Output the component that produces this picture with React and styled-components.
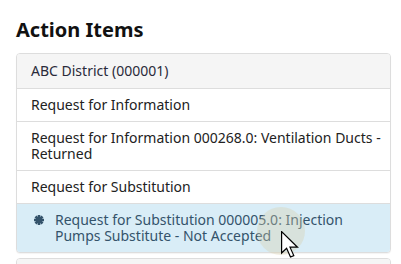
import React from 'react';
import styled, { createGlobalStyle } from 'styled-components';

const GlobalStyle = createGlobalStyle`
  html, body {
    margin: 0;
    padding: 0;
    background: #fff;
  }
  body {
    font-family: 'Noto Sans', 'Open Sans', sans-serif;
    color: #222;
  }
`;

const Page = styled.div`
  position: relative;
  width: 401px;
  height: 264px;
  overflow: hidden;
  padding: 0 10px 0 16px;
  box-sizing: border-box;
`;

const Title = styled.h2`
  margin: 0;
  padding-top: 16px;
  font-size: 20px;
  line-height: 28px;
  font-weight: 700;
  color: #111;
  height: 37px;
`;

const Panel = styled.section`
  border: 1px solid #ddd;
  border-radius: 4px;
  background: #fff;
  overflow: hidden;
  margin-bottom: 5px;
  box-shadow: 0 1px 1px rgba(0, 0, 0, 0.05);
`;

const PanelHeading = styled.div`
  background: #f5f5f5;
  padding: 9px 14px;
  font-size: 14px;
  line-height: 16px;
  color: #2a2a3a;
  min-height: 16px;
`;

const Row = styled.div`
  display: flex;
  align-items: flex-start;
  gap: 11px;
  border-top: 1px solid #ddd;
  padding: 8px 8px 8px 14px;
  font-size: 14px;
  line-height: 16px;
  background: ${(p) => (p.$active ? '#d9edf7' : '#fff')};
  color: ${(p) => (p.$active ? '#34536b' : '#222')};
`;

const Icon = styled.svg`
  flex: none;
  width: 10px;
  height: 10px;
  margin: 3px 0 0 3px;
`;

const Cursor = styled.div`
  position: absolute;
  left: 257px;
  top: 207px;
  width: 48px;
  height: 48px;
  border-radius: 50%;
  background: rgba(215, 205, 170, 0.35);
  pointer-events: none;
  svg {
    position: absolute;
    left: 24px;
    top: 24px;
  }
`;

function Asterisk() {
  return (
    <Icon viewBox="0 0 10 10">
      <g stroke="#34536b" strokeWidth="2.6" strokeLinecap="butt">
        <line x1="5" y1="0" x2="5" y2="10" />
        <line x1="0" y1="5" x2="10" y2="5" />
        <line x1="1.5" y1="1.5" x2="8.5" y2="8.5" />
        <line x1="8.5" y1="1.5" x2="1.5" y2="8.5" />
      </g>
    </Icon>
  );
}

const items = [
  { text: 'Request for Information' },
  { text: 'Request for Information 000268.0: Ventilation Ducts - Returned' },
  { text: 'Request for Substitution' },
  {
    text: 'Request for Substitution 000005.0: Injection Pumps Substitute - Not Accepted',
    active: true,
  },
];

export default function App() {
  return (
    <Page>
      <GlobalStyle />
      <Title>Action Items</Title>
      <Panel>
        <PanelHeading>ABC District (000001)</PanelHeading>
        {items.map((item) => (
          <Row key={item.text} $active={item.active}>
            {item.active && <Asterisk />}
            <span>{item.text}</span>
          </Row>
        ))}
      </Panel>
      <Panel>
        <PanelHeading />
      </Panel>
      <Cursor>
        <svg width="19" height="28" viewBox="0 0 19 28">
          <path
            d="M0.6 0.6 L0.6 22 L5.6 17.2 L9.5 26 L12.8 24.6 L9 16.2 L16.5 16.2 Z"
            fill="#fff"
            stroke="#000"
            strokeWidth="1.2"
            strokeLinejoin="miter"
          />
        </svg>
      </Cursor>
    </Page>
  );
}
